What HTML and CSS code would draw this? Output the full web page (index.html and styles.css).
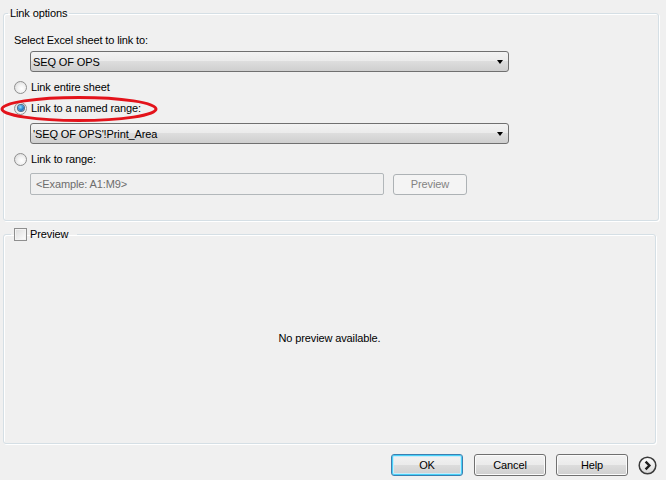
FILE: index.html
```html
<!DOCTYPE html>
<html>
<head>
<meta charset="utf-8">
<link rel="stylesheet" href="styles.css">
</head>
<body>
<div class="dialog">
  <fieldset class="group group-link">
    <legend class="legend-link">Link options</legend>
    <div class="label">Select Excel sheet to link to:</div>
    <div class="select sel-first"><span class="select-text">SEQ OF OPS</span><span class="arrow"></span></div>
    <div class="radio radio-first"><span class="rb"></span><span>Link entire sheet</span></div>
    <div class="radio"><span class="rb rb-checked"><span class="dot"></span></span><span>Link to a named range:</span></div>
    <div class="select sel-second"><span class="select-text">'SEQ OF OPS'!Print_Area</span><span class="arrow"></span></div>
    <div class="radio radio-third"><span class="rb"></span><span>Link to range:</span></div>
    <div class="range-row">
      <div class="input">&lt;Example: A1:M9&gt;</div>
      <div class="btn-disabled">Preview</div>
    </div>
  </fieldset>
  <fieldset class="group group-preview">
    <legend class="legend-preview"><span class="cb"></span><span>Preview</span></legend>
    <div class="empty">No preview available.</div>
  </fieldset>
  <div class="buttons">
    <div class="btn btn-default">OK</div>
    <div class="btn">Cancel</div>
    <div class="btn">Help</div>
    <svg class="more" width="19" height="19" viewBox="0 0 19 19">
      <defs>
        <linearGradient id="g" x1="0" y1="0" x2="0" y2="1">
          <stop offset="0" stop-color="#ffffff"/>
          <stop offset="1" stop-color="#d8d8d8"/>
        </linearGradient>
      </defs>
      <circle cx="9.5" cy="9.5" r="8.3" fill="url(#g)" stroke="#3b3b3b" stroke-width="1.5"/>
      <path d="M7.6 5.6 L11.4 9.5 L7.6 13.4" fill="none" stroke="#1e1e1e" stroke-width="2.4" stroke-linecap="butt" stroke-linejoin="miter"/>
    </svg>
  </div>
  <svg class="highlight" width="162" height="28" viewBox="0 0 162 28">
    <ellipse cx="79" cy="13" rx="77" ry="11.5" fill="none" stroke="#e3131b" stroke-width="3"/>
  </svg>
</div>
</body>
</html>
```

FILE: styles.css
```css
html, body {
  margin: 0;
  padding: 0;
  background: #f0f0f0;
}

body {
  font-family: "Liberation Sans", Arial, sans-serif;
  font-size: 11px;
  letter-spacing: -0.12px;
  color: #000;
  width: 666px;
  height: 480px;
  overflow: hidden;
}

.dialog {
  position: relative;
  padding: 7px 0 0 3px;
  display: flex;
  flex-direction: column;
}

.group {
  margin: 0;
  border: 1px solid #d5dfe5;
  border-radius: 3px;
  box-shadow: 1px 1px 0 #ffffff, inset 1px 1px 0 #ffffff;
  min-width: 0;
}

.group-link {
  margin-right: 7px;
  padding: 0 0 25px 10px;
}

.group-preview {
  margin: 7px 10px 0 0;
  padding: 0;
}

legend {
  line-height: 13px;
  height: 13px;
}

.legend-link {
  margin-left: -6px;
  padding: 0 2px;
}

.legend-preview {
  margin-left: 7px;
  padding: 0 9px 0 3px;
  display: flex;
  align-items: center;
}

.cb {
  width: 11px;
  height: 11px;
  border: 1px solid #8f8f8f;
  background: linear-gradient(135deg, #dcdcdc 0%, #f4f4f4 70%, #ffffff 100%);
  box-shadow: inset 0 0 0 1px #f4f4f4;
  margin-right: 3px;
}

.label {
  margin-top: 13px;
  line-height: 14px;
  height: 14px;
}

.select {
  margin-left: 16px;
  height: 19px;
  border: 1px solid #707070;
  border-radius: 3px;
  background: linear-gradient(#f3f3f3 0%, #ebebeb 45%, #dddddd 50%, #cfcfcf 100%);
  display: flex;
  align-items: center;
  justify-content: space-between;
  padding: 0 5px 0 2px;
  box-sizing: content-box;
  width: 470px;
}

.sel-first {
  margin-top: 4px;
}

.sel-second {
  margin-top: 8px;
}

.arrow {
  width: 0;
  height: 0;
  border-left: 3.5px solid transparent;
  border-right: 3.5px solid transparent;
  border-top: 4px solid #000;
}

.radio {
  margin-top: 7px;
  height: 14px;
  line-height: 14px;
  display: flex;
  align-items: center;
}

.radio-first {
  margin-top: 8px;
}

.radio-third {
  margin-top: 8px;
}

.rb {
  width: 11px;
  height: 11px;
  border: 1px solid #8f8f8f;
  border-radius: 50%;
  background: radial-gradient(circle at 60% 60%, #ffffff 0%, #f2f2f2 40%, #d3d3d3 100%);
  margin-right: 4px;
  display: flex;
  align-items: center;
  justify-content: center;
}

.rb-checked .dot {
  width: 6px;
  height: 6px;
  border-radius: 50%;
  background: radial-gradient(circle at 40% 35%, #8fe0ff 0%, #2f8fd8 45%, #0c3c7c 100%);
  box-shadow: 0 0 0 1px #4e6d8c;
}

.range-row {
  margin-top: 7px;
  margin-left: 16px;
  display: flex;
  align-items: flex-start;
  gap: 9px;
}

.input {
  width: 347px;
  height: 20px;
  line-height: 20px;
  border: 1px solid #b2b7ba;
  border-radius: 2px;
  padding-left: 5px;
  color: #6d6d6d;
  background: #f0f0f0;
}

.btn-disabled {
  margin-top: 1px;
  width: 72px;
  height: 19px;
  line-height: 19px;
  border: 1px solid #adb2b5;
  border-radius: 3px;
  background: #f4f4f4;
  color: #838383;
  text-align: center;
}

.empty {
  height: 202px;
  padding-bottom: 8px;
  box-sizing: border-box;
  display: flex;
  align-items: center;
  justify-content: center;
  line-height: 14px;
}

.buttons {
  margin-top: 10px;
  padding-right: 9px;
  display: flex;
  justify-content: flex-end;
  align-items: center;
  gap: 10px;
}

.btn {
  width: 70px;
  height: 20px;
  line-height: 20px;
  border: 1px solid #707070;
  border-radius: 3px;
  background: linear-gradient(#f2f2f2 0%, #ebebeb 50%, #dddddd 50%, #cfcfcf 100%);
  box-shadow: inset 0 0 0 1px #fbfbfb;
  text-align: center;
}

.btn-default {
  margin-right: 1px;
  border-color: #3c7fb1;
  box-shadow: inset 0 0 0 1px #48d1f8, inset 0 0 0 2px #c8ebfa;
}

.more {
  margin-left: 0;
}

.highlight {
  position: absolute;
  left: 0;
  top: 96px;
}
```
